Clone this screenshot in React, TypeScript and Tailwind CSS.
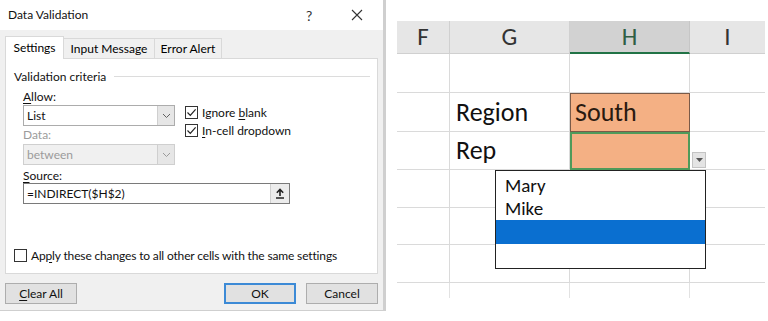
import type { ReactNode } from 'react';

const UI_FONT = 'font-["Segoe_UI","Lato",sans-serif]';
const SHEET_FONT = 'font-["Calibri","Lato",sans-serif]';

function Key({ children }: { children: ReactNode }) {
  return <span className="underline underline-offset-2">{children}</span>;
}

function Chevron({ disabled }: { disabled?: boolean }) {
  return (
    <svg width="9" height="6" viewBox="0 0 9 6" fill="none">
      <path d="M1 1l3.5 3.5L8 1" stroke={disabled ? '#9a9a9a' : '#606060'} strokeWidth="1" />
    </svg>
  );
}

function Check({ checked }: { checked?: boolean }) {
  return (
    <span className="flex size-[13px] shrink-0 items-center justify-center border border-[#333] bg-white">
      {checked && (
        <svg width="11" height="11" viewBox="0 0 11 11" fill="none">
          <path d="M1.5 5.5l2.8 2.8L9.6 2.3" stroke="#222" strokeWidth="1.2" />
        </svg>
      )}
    </span>
  );
}

function Select({ value, disabled }: { value: string; disabled?: boolean }) {
  return (
    <div
      className={`flex h-[21px] w-[152px] items-stretch border ${
        disabled ? 'border-[#cfcfcf] bg-[#f0f0f0] text-[#9b9b9b]' : 'border-[#acacac] bg-white text-[#111]'
      }`}
    >
      <span className="flex-1 pl-[3px] leading-[19px]">{value}</span>
      <span className="flex w-[17px] items-center justify-center border-l border-[#cfcfcf] bg-[#e6e6e6]">
        <Chevron disabled={disabled} />
      </span>
    </div>
  );
}

function Button({ children, primary }: { children: ReactNode; primary?: boolean }) {
  return (
    <div
      className={`flex h-[21px] w-[72px] items-center justify-center bg-[#e1e1e1] text-[#111] ${
        primary ? 'border-2 border-[#3c8ad6]' : 'border border-[#adadad]'
      }`}
    >
      {children}
    </div>
  );
}

function Dialog() {
  return (
    <div className={`flex h-[311px] w-[386px] shrink-0 flex-col border-r-[3px] border-b border-[#cfcfcf] text-[12px] ${UI_FONT}`}>
      {/* title bar */}
      <div className="flex h-[30px] items-center bg-white pl-[8px] text-[#111]">
        <span className="flex-1">Data Validation</span>
        <span className="w-[45px] text-[14px] text-[#333]">?</span>
        <svg width="12" height="12" viewBox="0 0 12 12" className="mr-[20px]">
          <path d="M1 1l10 10M11 1L1 11" stroke="#333" strokeWidth="1.1" />
        </svg>
      </div>

      <div className="flex flex-1 flex-col bg-[#f0f0f0] px-[5px]">
        {/* tabs */}
        <div className="flex h-[28px] items-end">
          <div className="-mb-px z-10 flex h-[23px] w-[59px] items-center justify-center border border-b-0 border-[#d9d9d9] bg-white">
            Settings
          </div>
          <div className="flex h-[20px] w-[91px] items-center justify-center border border-l-0 border-b-0 border-[#d9d9d9] bg-[#f0f0f0]">
            Input Message
          </div>
          <div className="flex h-[20px] w-[67px] items-center justify-center border border-l-0 border-b-0 border-[#d9d9d9] bg-[#f0f0f0]">
            Error Alert
          </div>
        </div>

        {/* tab panel */}
        <div className="flex h-[216px] flex-col border border-[#d9d9d9] bg-white pl-[8px] pr-[7px] text-[#111]">
          <div className="mt-[10px] flex items-center gap-[8px] leading-[15px]">
            <span>Validation criteria</span>
            <span className="h-px flex-1 bg-[#dcdcdc]" />
          </div>

          <div className="mt-[5px] flex pl-[9px]">
            <div className="flex w-[152px] flex-col">
              <span className="leading-[15px]">
                <Key>A</Key>llow:
              </span>
              <div className="mt-[1px]">
                <Select value="List" />
              </div>
              <span className="mt-[1px] leading-[15px] text-[#9b9b9b]">Data:</span>
              <div className="mt-[2px]">
                <Select value="between" disabled />
              </div>
            </div>
            <div className="ml-[10px] flex flex-col gap-[5px] pt-[17px]">
              <label className="flex h-[13px] items-center gap-[4px]">
                <Check checked />
                <span>
                  Ignore <Key>b</Key>lank
                </span>
              </label>
              <label className="flex h-[13px] items-center gap-[4px]">
                <Check checked />
                <span>
                  <Key>I</Key>n-cell dropdown
                </span>
              </label>
            </div>
          </div>

          <span className="mt-[3px] pl-[9px] leading-[15px]">
            <Key>S</Key>ource:
          </span>
          <div className="ml-[9px] flex h-[21px] w-[267px] items-stretch border border-[#7a7a7a]">
            <span className="flex-1 pl-[3px] leading-[19px]">=INDIRECT($H$2)</span>
            <span className="flex w-[19px] items-center justify-center border-l border-[#cfcfcf] bg-[#ececec]">
              <svg width="10" height="11" viewBox="0 0 10 11" fill="none">
                <path d="M5 8V1.5M1.8 4.7L5 1.5l3.2 3.2M1 10h8" stroke="#222" strokeWidth="1.6" />
              </svg>
            </span>
          </div>

          <div className="flex-1" />
          <label className="mb-[11px] flex h-[13px] items-center gap-[4px]">
            <Check />
            <span className="tracking-[-0.15px]">
              Ap<Key>p</Key>ly these changes to all other cells with the same settings
            </span>
          </label>
        </div>

        {/* buttons */}
        <div className="mt-[9px] flex">
          <Button>
            <span>
              <Key>C</Key>lear All
            </span>
          </Button>
          <div className="flex-1" />
          <Button primary>OK</Button>
          <div className="w-[10px]" />
          <Button>Cancel</Button>
        </div>
      </div>
    </div>
  );
}

const COLS = [
  { name: 'F', w: 'w-[53px]' },
  { name: 'G', w: 'w-[120px]' },
  { name: 'H', w: 'w-[120px]' },
  { name: 'I', w: 'w-[75px]' }
];

const ROWS = [
  { h: 'h-[39px]', g: '', hv: '' },
  { h: 'h-[39px]', g: 'Region', hv: 'South' },
  { h: 'h-[38px]', g: 'Rep', hv: '' },
  { h: 'h-[38px]', g: '', hv: '' },
  { h: 'h-[37px]', g: '', hv: '' },
  { h: 'h-[38px]', g: '', hv: '' }
];

function Sheet() {
  return (
    <div className={`relative ml-[11px] flex flex-col pt-[21px] ${SHEET_FONT}`}>
      {/* column headers */}
      <div className="flex h-[33px]">
        {COLS.map((c) =>
          c.name === 'H' ? (
            <div
              key={c.name}
              className={`${c.w} flex items-center justify-center border-r border-b-2 border-r-[#c6c6c6] border-b-[#217346] bg-[#d2d2d2] text-[25px] text-[#2f5f45]`}
            >
              {c.name}
            </div>
          ) : (
            <div
              key={c.name}
              className={`${c.w} flex items-center justify-center border-r border-b border-[#d0d0d0] bg-[#e6e6e6] text-[25px] text-[#333] last:border-r-0`}
            >
              {c.name}
            </div>
          )
        )}
      </div>

      {ROWS.map((r, i) => (
        <div key={i} className={`flex ${r.h}`}>
          <div className="w-[53px] border-r border-b border-[#dadada]" />
          <div className="flex w-[120px] items-center border-r border-b border-[#dadada] pl-[6px] text-[26px] text-[#111]">
            {r.g}
          </div>
          {i === 1 ? (
            <div className="flex w-[120px] items-center border border-[#7a5a48] bg-[#f4b084] pl-[4px] text-[26px] text-[#2a1a10]">
              {r.hv}
            </div>
          ) : i === 2 ? (
            <div className="w-[120px] border-2 border-[#4f9a5a] bg-[#f4b084]" />
          ) : (
            <div className="w-[120px] border-r border-b border-[#dadada]" />
          )}
          <div className="w-[75px] border-b border-[#dadada]" />
        </div>
      ))}

      <div className="flex h-[15px]">
        <div className="w-[53px] border-r border-[#e2e2e2]" />
        <div className="w-[120px] border-r border-[#e2e2e2]" />
        <div className="w-[120px] border-r border-[#e2e2e2]" />
      </div>

      {/* in-cell dropdown arrow */}
      <div className="absolute left-[295px] top-[152px] flex h-[16px] w-[14px] items-center justify-center border border-[#c4c4c4] bg-[#e4e4e4]">
        <svg width="7" height="4" viewBox="0 0 7 4">
          <path d="M0 0h7L3.5 4z" fill="#555" />
        </svg>
      </div>

      {/* dropdown list */}
      <div className="absolute left-[98px] top-[170px] flex h-[99px] w-[211px] flex-col border border-[#222] bg-white pt-[3px] text-[19px] text-[#111]">
        <div className="h-[23px] pl-[9px] leading-[23px]">Mary</div>
        <div className="h-[23px] pl-[9px] leading-[23px]">Mike</div>
        <div className="h-[24px] bg-[#0a6fd0]" />
        <div className="flex-1" />
      </div>
    </div>
  );
}

export default function App() {
  return (
    <div className="flex h-[321px] w-[768px] overflow-hidden bg-white">
      <Dialog />
      <Sheet />
    </div>
  );
}
